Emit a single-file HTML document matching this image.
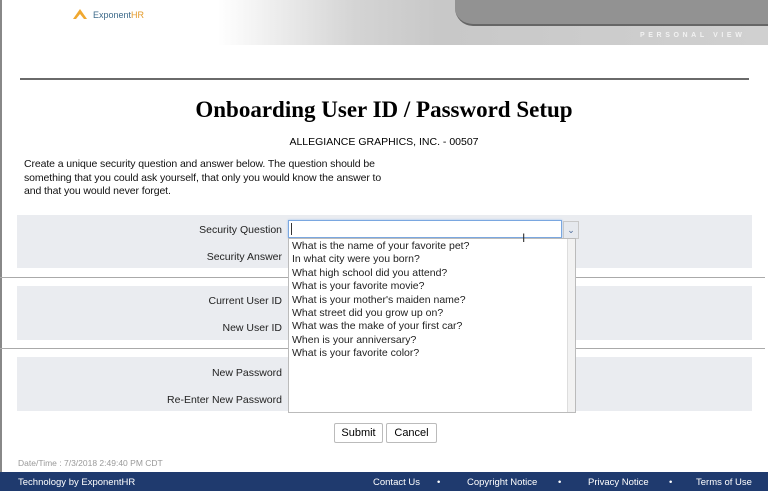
<!DOCTYPE html>
<html><head><style>
body{margin:0;width:768px;height:491px;position:relative;overflow:hidden;background:#fff;font-family:"Liberation Sans",Arial,sans-serif;}
.a{position:absolute;}
.lbl{position:absolute;font-size:10.5px;color:#222;text-align:right;width:282px;left:0;}
.panel{position:absolute;left:17px;width:735px;background:#eaecf0;}
.hr{position:absolute;left:0;width:765px;height:1px;background:#aaa;}
.opt{font-size:10.5px;color:#222;line-height:13.4px;padding-left:3px;}
.btn{position:absolute;top:423px;height:18px;border:1px solid #bbb;background:#fff;font-size:11px;line-height:18px;text-align:center;border-radius:2px;}
.fl{position:absolute;top:477px;font-size:9.5px;color:#fff;}
</style></head><body>
<div class="a" style="left:0;top:0;width:2px;height:491px;background:#888"></div>
<div class="a" style="left:218px;top:0;width:550px;height:45px;background:linear-gradient(90deg,#fff 0%,#d4d4d4 25%,#c8c8c8 40%,#d0d0d0 100%);"></div>
<div class="a" style="left:455px;top:0;width:313px;height:24px;background:#929292;border-bottom:2px solid #666;border-bottom-left-radius:18px;"></div>
<div class="a" style="left:640px;top:32px;font-size:7px;letter-spacing:3.6px;color:#f2f2f2;font-weight:bold;white-space:nowrap">PERSONAL VIEW</div>
<div class="a" style="left:73px;top:9px;width:0;height:0;border-left:7px solid transparent;border-right:7px solid transparent;border-bottom:10px solid #f0a830"></div>
<div class="a" style="left:76px;top:14px;width:0;height:0;border-left:4px solid transparent;border-right:4px solid transparent;border-bottom:5px solid #fff"></div>
<div class="a" style="left:93px;top:10px;font-size:9px;color:#3d6a8a">Exponent<span style="color:#e39a2a">HR</span></div>
<div class="a" style="left:20px;top:78px;width:729px;height:2px;background:#6a6a6a"></div>
<div class="a" style="left:0;width:768px;top:97px;text-align:center;font-family:'Liberation Serif',serif;font-weight:bold;font-size:23px;color:#000">Onboarding User ID / Password Setup</div>
<div class="a" style="left:0;width:768px;top:136px;text-align:center;font-size:10.5px;color:#000">ALLEGIANCE GRAPHICS, INC. - 00507</div>
<div class="a" style="left:24px;top:158px;width:365px;font-size:10.5px;line-height:13.5px;color:#111;letter-spacing:-0.1px">Create a unique security question and answer below. The question should be something that you could ask yourself, that only you would know the answer to and that you would never forget.</div>
<div class="panel" style="top:215px;height:53px"></div>
<div class="hr" style="top:277px"></div>
<div class="panel" style="top:286px;height:54px"></div>
<div class="hr" style="top:348px"></div>
<div class="panel" style="top:357px;height:54px"></div>
<div class="lbl" style="top:224px">Security Question</div>
<div class="lbl" style="top:251px">Security Answer</div>
<div class="lbl" style="top:295px">Current User ID</div>
<div class="lbl" style="top:322px">New User ID</div>
<div class="lbl" style="top:367px">New Password</div>
<div class="lbl" style="top:394px">Re-Enter New Password</div>
<div class="a" style="left:288px;top:220px;width:272px;height:16px;border:1px solid #7aa7e0;box-shadow:0 0 2px #9cc0f0;background:#fff"></div>
<div class="a" style="left:291px;top:223px;width:1px;height:12px;background:#333"></div>
<div class="a" style="left:563px;top:221px;width:14px;height:16px;background:#e6e9ee;border:1px solid #c8c8c8;font-size:9px;color:#4a6a9a;text-align:center;line-height:16px">&#8964;</div>
<div class="a" style="left:288px;top:238px;width:286px;height:173px;border:1px solid #bbb;background:#fff">
<div style="position:absolute;right:0;top:0;width:7px;height:173px;background:#f2f2f2;border-left:1px solid #ddd"></div>
<div class="opt" style="padding-top:1px">What is the name of your favorite pet?</div>
<div class="opt">In what city were you born?</div>
<div class="opt">What high school did you attend?</div>
<div class="opt">What is your favorite movie?</div>
<div class="opt">What is your mother's maiden name?</div>
<div class="opt">What street did you grow up on?</div>
<div class="opt">What was the make of your first car?</div>
<div class="opt">When is your anniversary?</div>
<div class="opt">What is your favorite color?</div>
</div>
<div class="a" style="left:522px;top:231px;font-size:12px;color:#333">I</div>
<div class="btn" style="left:334px;width:47px">Submit</div>
<div class="btn" style="left:386px;width:49px">Cancel</div>
<div class="a" style="left:18px;top:458px;font-size:8.5px;color:#999">Date/Time : 7/3/2018 2:49:40 PM CDT</div>
<div class="a" style="left:0;top:472px;width:768px;height:19px;background:#1f3a6e"></div>
<div class="fl" style="left:18px">Technology by ExponentHR</div>
<div class="fl" style="left:373px">Contact Us</div>
<div class="fl" style="left:437px">•</div>
<div class="fl" style="left:467px">Copyright Notice</div>
<div class="fl" style="left:558px">•</div>
<div class="fl" style="left:588px">Privacy Notice</div>
<div class="fl" style="left:669px">•</div>
<div class="fl" style="left:696px">Terms of Use</div>
</body></html>
